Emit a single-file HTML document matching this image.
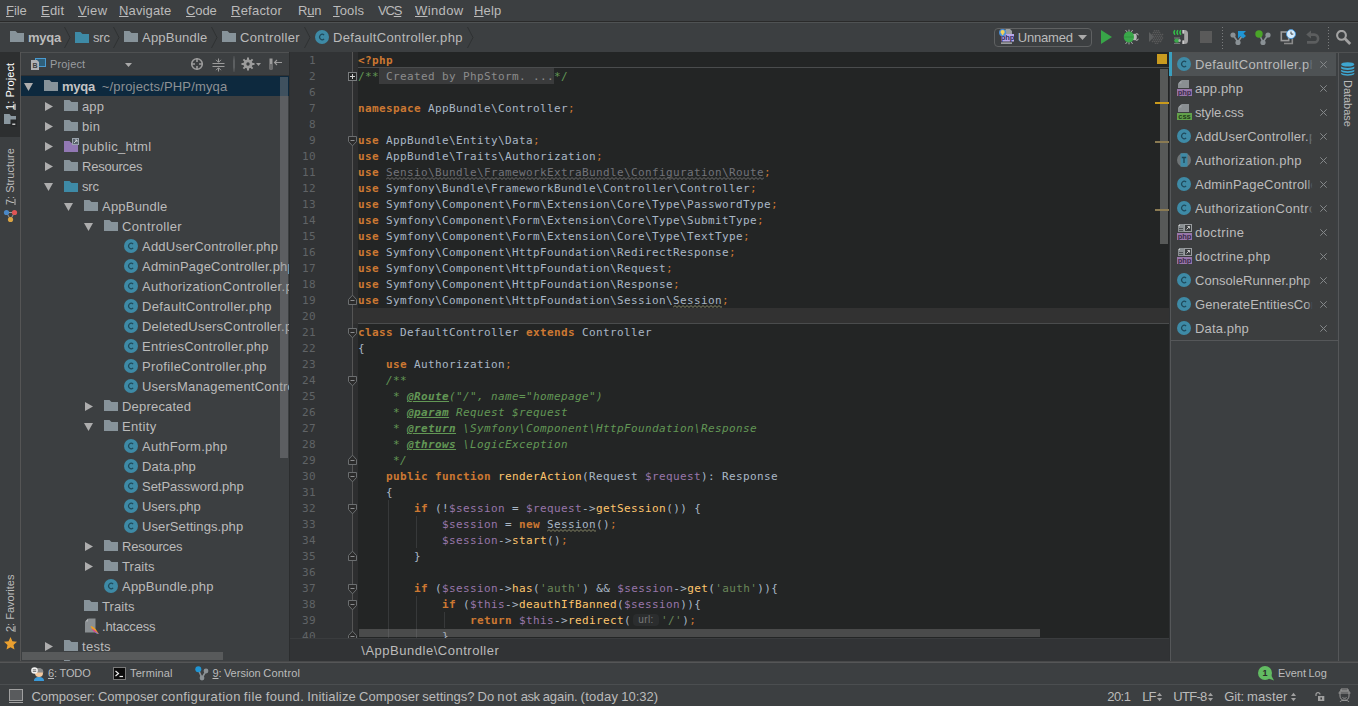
<!DOCTYPE html>
<html lang="en">
<head>
<meta charset="utf-8">
<title>myqa - DefaultController.php - PhpStorm</title>
<style>
html,body{margin:0;padding:0;background:#3c3f41;}
body{width:1358px;height:706px;overflow:hidden;font-family:"Liberation Sans",sans-serif;font-size:13px;color:#bbbbbb;}
#app{position:relative;width:1358px;height:706px;overflow:hidden;background:#3c3f41;}
#app>div,#app>svg,#app>span{position:absolute;}
.t{white-space:pre;display:block;}
u{text-decoration:underline;text-underline-offset:1px;}
.clip{overflow:hidden;}
.clip>*{position:absolute;}
.code{font-family:"DejaVu Sans Mono","Liberation Mono",monospace;font-size:11px;line-height:16px;letter-spacing:0.378px;white-space:pre;color:#a9b7c6;}
.code div{height:16px;overflow:hidden;}
.ln{font-family:"DejaVu Sans Mono","Liberation Mono",monospace;font-size:11px;line-height:16px;letter-spacing:0.378px;color:#606366;text-align:right;}
.ln div{height:16px;}
.k{color:#cc7832;font-weight:bold;}
.o{color:#cc7832;}
.v{color:#9876aa;}
.f{color:#ffc66d;}
.s{color:#6a8759;}
.d{color:#629755;font-style:italic;}
.dn{color:#629755;}
.dt{color:#629755;font-style:italic;font-weight:bold;text-decoration:underline;}
.g{color:#72737a;}
.wv{}
.fold{color:#8c8c8c;}
.sp{display:inline-block;width:30px;height:1px;}

</style>
</head>
<body>
<div id="app">
<div style="left:0px;top:0px;width:1358px;height:21px;background:#3c3f41;"></div>
<div style="left:0px;top:21px;width:1358px;height:1px;background:#2a2a2a;"></div>
<div style="left:0px;top:22px;width:1358px;height:1px;background:#4f5253;"></div>
<span class="t" style="left:6.00px;top:4.00px;font-size:13px;line-height:13px;color:#bbbbbb;letter-spacing:-0.044px;"><u>F</u>ile</span>
<span class="t" style="left:41.00px;top:4.00px;font-size:13px;line-height:13px;color:#bbbbbb;letter-spacing:0.216px;"><u>E</u>dit</span>
<span class="t" style="left:78.00px;top:4.00px;font-size:13px;line-height:13px;color:#bbbbbb;letter-spacing:0.355px;"><u>V</u>iew</span>
<span class="t" style="left:119.00px;top:4.00px;font-size:13px;line-height:13px;color:#bbbbbb;letter-spacing:0.129px;"><u>N</u>avigate</span>
<span class="t" style="left:186.00px;top:4.00px;font-size:13px;line-height:13px;color:#bbbbbb;letter-spacing:-0.115px;"><u>C</u>ode</span>
<span class="t" style="left:231.00px;top:4.00px;font-size:13px;line-height:13px;color:#bbbbbb;letter-spacing:0.231px;"><u>R</u>efactor</span>
<span class="t" style="left:298.00px;top:4.00px;font-size:13px;line-height:13px;color:#bbbbbb;letter-spacing:-0.233px;">R<u>u</u>n</span>
<span class="t" style="left:333.00px;top:4.00px;font-size:13px;line-height:13px;color:#bbbbbb;letter-spacing:0.159px;"><u>T</u>ools</span>
<span class="t" style="left:378.00px;top:4.00px;font-size:13px;line-height:13px;color:#bbbbbb;letter-spacing:-1.160px;">VC<u>S</u></span>
<span class="t" style="left:415.00px;top:4.00px;font-size:13px;line-height:13px;color:#bbbbbb;letter-spacing:0.390px;"><u>W</u>indow</span>
<span class="t" style="left:474.00px;top:4.00px;font-size:13px;line-height:13px;color:#bbbbbb;letter-spacing:0.186px;"><u>H</u>elp</span>
<div style="left:0px;top:23px;width:1358px;height:29px;background:#3c3f41;"></div>
<svg style="left:10px;top:31px;" width="14" height="11" viewBox="0 0 14 11"><path d="M0 0H5.5L7.5 2H14V11H0Z" fill="#87939a"/></svg>
<span class="t" style="left:28.00px;top:31.00px;font-size:13px;line-height:13px;color:#bbbbbb;letter-spacing:-0.215px;font-weight:700;">myqa</span>
<svg style="left:63.5px;top:27px;" width="7" height="21" viewBox="0 0 7 21"><path d="M0.5 0L6 10.5L0.5 21" fill="none" stroke="#2f3233" stroke-width="1"/></svg>
<svg style="left:75px;top:32px;" width="14" height="11" viewBox="0 0 14 11"><path d="M0 0H5.5L7.5 2H14V11H0Z" fill="#3e8aa6"/></svg>
<span class="t" style="left:93.00px;top:31.00px;font-size:13px;line-height:13px;color:#bbbbbb;letter-spacing:-0.195px;">src</span>
<svg style="left:112.5px;top:27px;" width="7" height="21" viewBox="0 0 7 21"><path d="M0.5 0L6 10.5L0.5 21" fill="none" stroke="#2f3233" stroke-width="1"/></svg>
<svg style="left:124px;top:31px;" width="14" height="11" viewBox="0 0 14 11"><path d="M0 0H5.5L7.5 2H14V11H0Z" fill="#87939a"/></svg>
<span class="t" style="left:142.00px;top:31.00px;font-size:13px;line-height:13px;color:#bbbbbb;letter-spacing:0.213px;">AppBundle</span>
<svg style="left:210.5px;top:27px;" width="7" height="21" viewBox="0 0 7 21"><path d="M0.5 0L6 10.5L0.5 21" fill="none" stroke="#2f3233" stroke-width="1"/></svg>
<svg style="left:222px;top:31px;" width="14" height="11" viewBox="0 0 14 11"><path d="M0 0H5.5L7.5 2H14V11H0Z" fill="#87939a"/></svg>
<span class="t" style="left:240.00px;top:31.00px;font-size:13px;line-height:13px;color:#bbbbbb;letter-spacing:0.371px;">Controller</span>
<svg style="left:303.5px;top:27px;" width="7" height="21" viewBox="0 0 7 21"><path d="M0.5 0L6 10.5L0.5 21" fill="none" stroke="#2f3233" stroke-width="1"/></svg>
<svg style="left:315px;top:30px;" width="14" height="14" viewBox="0 0 14 14"><circle cx="7" cy="7" r="7" fill="#3e8aa6"/><path d="M9.1 5A2.7 2.7 0 1 0 9.1 9" fill="none" stroke="#1f4a5c" stroke-width="1.15"/></svg>
<span class="t" style="left:333.00px;top:31.00px;font-size:13px;line-height:13px;color:#bbbbbb;letter-spacing:0.367px;">DefaultController.php</span>
<svg style="left:466.5px;top:27px;" width="7" height="21" viewBox="0 0 7 21"><path d="M0.5 0L6 10.5L0.5 21" fill="none" stroke="#2f3233" stroke-width="1"/></svg>
<div style="left:994px;top:28px;width:96px;height:17px;border:1px solid #5f6162;border-radius:4px;background:#3c3f41"></div>
<svg style="left:999px;top:28px;" width="16" height="17" viewBox="0 0 16 17"><path d="M7 1H11L13 3V7H6V2Z" fill="#9a9d9f"/><rect x="2" y="6" width="13" height="7.5" fill="#b9a7ea"/><text x="8.5" y="12.4" font-family="Liberation Sans,sans-serif" font-size="7.5" font-weight="bold" text-anchor="middle" fill="#2f2c5c">php</text><rect x="2" y="14.3" width="11" height="1.7" fill="#9a9d9f"/><circle cx="3.6" cy="4.6" r="3.6" fill="#4a90d9"/><circle cx="3.6" cy="4" r="2.1" fill="#f6d358"/><rect x="2.8" y="5.4" width="1.6" height="1.7" fill="#f6d358"/></svg>
<span class="t" style="left:1017.80px;top:31.00px;font-size:13px;line-height:13px;color:#bbbbbb;letter-spacing:-0.196px;">Unnamed</span>
<svg style="left:1078px;top:35px;" width="9" height="5" viewBox="0 0 9 5"><path d="M0 0H9L4.5 5Z" fill="#aaaaaa"/></svg>
<svg style="left:1101px;top:30px;" width="11" height="14" viewBox="0 0 11 14"><path d="M0 0L11 7L0 14Z" fill="#38a548"/></svg>
<svg style="left:1123px;top:29px;" width="16" height="16" viewBox="0 0 16 16"><path d="M2.5 1L4.3 3.2M6 0.6V2.8M9.6 1L8.2 3.2M2.5 15L4.3 12.8M6 15.4V13.2M9.6 15L8.2 12.8" stroke="#a8a8a8" stroke-width="1" fill="none"/><ellipse cx="11.2" cy="8" rx="2.6" ry="3.2" fill="#b8b8b8"/><path d="M12.2 5.4C13.6 4.2 15 4.8 15.4 6.2M12.2 10.6C13.6 11.8 15 11.2 15.4 9.8" stroke="#c4c4c4" stroke-width="1" fill="none"/><path d="M6 2.6C9 2.6 11 5 11 8S9 13.4 6 13.4S0.8 11 0.8 8S3 2.6 6 2.6Z" fill="#3aa84a"/><path d="M1 8H10" stroke="#2f8f3e" stroke-width="0.8"/></svg>
<svg style="left:1148px;top:30px;" width="16" height="14" viewBox="0 0 16 14"><path d="M1 2L6 7L1 12Z" fill="#5c5e5f"/><g fill="#58595a"><rect x="5.8" y="0.1" width="1.4" height="1.4" transform="rotate(45 6.5 0.8)"/><rect x="7.8" y="0.1" width="1.4" height="1.4" transform="rotate(45 8.5 0.8)"/><rect x="9.8" y="0.1" width="1.4" height="1.4" transform="rotate(45 10.5 0.8)"/><rect x="4.8" y="1.9" width="1.4" height="1.4" transform="rotate(45 5.5 2.6)"/><rect x="6.8" y="1.9" width="1.4" height="1.4" transform="rotate(45 7.5 2.6)"/><rect x="8.8" y="1.9" width="1.4" height="1.4" transform="rotate(45 9.5 2.6)"/><rect x="10.8" y="1.9" width="1.4" height="1.4" transform="rotate(45 11.5 2.6)"/><rect x="3.8" y="3.7" width="1.4" height="1.4" transform="rotate(45 4.5 4.4)"/><rect x="5.8" y="3.7" width="1.4" height="1.4" transform="rotate(45 6.5 4.4)"/><rect x="7.8" y="3.7" width="1.4" height="1.4" transform="rotate(45 8.5 4.4)"/><rect x="9.8" y="3.7" width="1.4" height="1.4" transform="rotate(45 10.5 4.4)"/><rect x="11.8" y="3.7" width="1.4" height="1.4" transform="rotate(45 12.5 4.4)"/><rect x="13.8" y="3.7" width="1.4" height="1.4" transform="rotate(45 14.5 4.4)"/><rect x="4.8" y="5.5" width="1.4" height="1.4" transform="rotate(45 5.5 6.2)"/><rect x="6.8" y="5.5" width="1.4" height="1.4" transform="rotate(45 7.5 6.2)"/><rect x="8.8" y="5.5" width="1.4" height="1.4" transform="rotate(45 9.5 6.2)"/><rect x="10.8" y="5.5" width="1.4" height="1.4" transform="rotate(45 11.5 6.2)"/><rect x="12.8" y="5.5" width="1.4" height="1.4" transform="rotate(45 13.5 6.2)"/><rect x="3.8" y="7.3" width="1.4" height="1.4" transform="rotate(45 4.5 8.0)"/><rect x="5.8" y="7.3" width="1.4" height="1.4" transform="rotate(45 6.5 8.0)"/><rect x="7.8" y="7.3" width="1.4" height="1.4" transform="rotate(45 8.5 8.0)"/><rect x="9.8" y="7.3" width="1.4" height="1.4" transform="rotate(45 10.5 8.0)"/><rect x="11.8" y="7.3" width="1.4" height="1.4" transform="rotate(45 12.5 8.0)"/><rect x="13.8" y="7.3" width="1.4" height="1.4" transform="rotate(45 14.5 8.0)"/><rect x="4.8" y="9.1" width="1.4" height="1.4" transform="rotate(45 5.5 9.8)"/><rect x="6.8" y="9.1" width="1.4" height="1.4" transform="rotate(45 7.5 9.8)"/><rect x="8.8" y="9.1" width="1.4" height="1.4" transform="rotate(45 9.5 9.8)"/><rect x="10.8" y="9.1" width="1.4" height="1.4" transform="rotate(45 11.5 9.8)"/><rect x="12.8" y="9.1" width="1.4" height="1.4" transform="rotate(45 13.5 9.8)"/><rect x="3.8" y="10.9" width="1.4" height="1.4" transform="rotate(45 4.5 11.6)"/><rect x="5.8" y="10.9" width="1.4" height="1.4" transform="rotate(45 6.5 11.6)"/><rect x="7.8" y="10.9" width="1.4" height="1.4" transform="rotate(45 8.5 11.6)"/><rect x="9.8" y="10.9" width="1.4" height="1.4" transform="rotate(45 10.5 11.6)"/><rect x="11.8" y="10.9" width="1.4" height="1.4" transform="rotate(45 12.5 11.6)"/><rect x="6.8" y="12.7" width="1.4" height="1.4" transform="rotate(45 7.5 13.4)"/><rect x="8.8" y="12.7" width="1.4" height="1.4" transform="rotate(45 9.5 13.4)"/></g></svg>
<svg style="left:1173px;top:29px;" width="16" height="16" viewBox="0 0 16 16"><path d="M9.5 1H11.5A3.5 3.5 0 0 1 15 4.5V11.5A3.5 3.5 0 0 1 11.5 15H9.5V11.6H11.2V4.4H9.5Z" fill="#a4a4a4"/><path d="M9.5 1H11V4.4H9.5ZM9.5 11.6H11V15H9.5Z" fill="#c9c9c9"/><path d="M2 1.3c-1.2 1.3-1.2 3.1 0 4.4M5 1.3c-1.2 1.3-1.2 3.1 0 4.4M8 1.3c-1.2 1.3-1.2 3.1 0 4.4" stroke="#34c04a" stroke-width="1.5" fill="none"/><ellipse cx="3.8" cy="11.6" rx="2.6" ry="2.2" fill="#3aa84a"/><ellipse cx="6.6" cy="11.6" rx="1.2" ry="1.5" fill="#b0b0b0"/><path d="M1.5 9h1M3.5 9h1M5.5 9h1M1.5 14.4h1M3.5 14.4h1M5.5 14.4h1" stroke="#c8c8c8" stroke-width="0.9"/></svg>
<div style="left:1200px;top:31px;width:12px;height:12px;background:#5a5a5a;"></div>
<div style="left:1222px;top:27px;width:1px;height:22px;background:repeating-linear-gradient(180deg,#7a7c7d 0,#7a7c7d 1px,rgba(0,0,0,0) 1px,rgba(0,0,0,0) 3px)"></div>
<div style="left:1328px;top:27px;width:1px;height:22px;background:repeating-linear-gradient(180deg,#7a7c7d 0,#7a7c7d 1px,rgba(0,0,0,0) 1px,rgba(0,0,0,0) 3px)"></div>
<svg style="left:1229.7px;top:29.5px;" width="17" height="16" viewBox="0 0 17 16"><path d="M3 5L8 12L12 6" stroke="#8a9195" stroke-width="1.6" fill="none"/><circle cx="3" cy="5" r="2.6" fill="#8a9195"/><circle cx="8" cy="12.5" r="2.6" fill="#8a9195"/><path d="M8 1H16L13.5 3.5L16 6L13 8.5L10.5 6L8 8.5Z" fill="#1f95d4"/></svg>
<svg style="left:1254.5px;top:29.5px;" width="17" height="16" viewBox="0 0 17 16"><path d="M4 4L8 12L13 5" stroke="#8a9195" stroke-width="1.6" fill="none"/><circle cx="13" cy="5" r="2.6" fill="#8a9195"/><circle cx="8" cy="12.5" r="2.6" fill="#8a9195"/><circle cx="4" cy="4" r="3.7" fill="#4aa528"/></svg>
<svg style="left:1279.5px;top:28.5px;" width="17" height="17" viewBox="0 0 17 17"><rect x="1.3" y="3" width="7.4" height="8.6" fill="none" stroke="#9a9a9a" stroke-width="1.6"/><path d="M4 14.5H12.3V10" fill="none" stroke="#8a8a8a" stroke-width="1.6"/><circle cx="11" cy="5.1" r="4.5" fill="#d8ecfb" stroke="#4a9be0" stroke-width="0.9"/><path d="M11 2.6V5.1H13.3" stroke="#444" stroke-width="1" fill="none"/></svg>
<svg style="left:1305px;top:30px;" width="15" height="15" viewBox="0 0 15 15"><path d="M1.2 4.6L6 0.6V8.6Z" fill="#5c5e5f"/><path d="M5.5 4.6H9.2A3.9 3.9 0 0 1 9.2 12.4H2" fill="none" stroke="#5c5e5f" stroke-width="2.6"/></svg>
<svg style="left:1336px;top:30px;" width="16" height="16" viewBox="0 0 16 16"><circle cx="5.5" cy="5.3" r="4.4" fill="none" stroke="#a3a3a3" stroke-width="2.1"/><path d="M8.8 8.6L14.2 14" stroke="#a3a3a3" stroke-width="2.8"/></svg>
<div style="left:0px;top:52px;width:20px;height:610px;background:#3c3f41;"></div>
<div style="left:0px;top:52px;width:20px;height:85px;background:#2d2f30;"></div>
<div style="left:20px;top:52px;width:1px;height:610px;background:#555555;"></div>
<span class="t" style="left:10px;top:109.5px;font-size:11px;line-height:11px;color:#ffffff;transform-origin:0 0;transform:rotate(-90deg) translateY(-50%);letter-spacing:0.073px"><u>1</u>: Project</span>
<svg style="left:4px;top:114px;" width="13" height="13" viewBox="0 0 13 13"><path d="M0 0H5.5L7 2H12V10H0Z" fill="#8a979f"/><rect x="6.5" y="5.5" width="6.5" height="7" fill="#262829"/><rect x="8.3" y="9.6" width="3" height="1.2" fill="#eeeeee"/></svg>
<span class="t" style="left:10px;top:205.3px;font-size:11px;line-height:11px;color:#bbbbbb;transform-origin:0 0;transform:rotate(-90deg) translateY(-50%);letter-spacing:-0.005px"><u>7</u>: Structure</span>
<svg style="left:3px;top:209px;" width="15" height="14" viewBox="0 0 15 14"><path d="M3.5 3.5L7.5 10.5L11.5 3.5Z" fill="none" stroke="#9a9a9a" stroke-width="1"/><circle cx="3.5" cy="3.5" r="2.6" fill="#4a88c7"/><circle cx="11.5" cy="3.5" r="2.6" fill="#e05555"/><circle cx="7.5" cy="10.5" r="2.6" fill="#d9a343"/></svg>
<span class="t" style="left:10px;top:631.6px;font-size:11px;line-height:11px;color:#bbbbbb;transform-origin:0 0;transform:rotate(-90deg) translateY(-50%);letter-spacing:-0.006px"><u>2</u>: Favorites</span>
<svg style="left:4px;top:636.5px;" width="13" height="13" viewBox="0 0 13 13"><path d="M6.5 0L8.4 4.3L13 4.8L9.5 7.9L10.5 12.6L6.5 10.2L2.5 12.6L3.5 7.9L0 4.8L4.6 4.3Z" fill="#eaa030"/></svg>
<div style="left:21px;top:52px;width:268px;height:1px;background:#4f5152;"></div>
<div style="left:21px;top:53px;width:268px;height:22px;background:#3c3f41;"></div>
<div style="left:21px;top:75px;width:268px;height:1px;background:#2f3133;"></div>
<svg style="left:31px;top:57px;" width="15" height="14" viewBox="0 0 15 14"><rect x="4.5" y="1.5" width="10" height="8" fill="#2f5f7a" stroke="#4a9bd1" stroke-width="1"/><path d="M0 3H6L8 5V13H0Z" fill="#afb1b3"/><text x="1.6" y="11.3" font-family="Liberation Sans,sans-serif" font-size="7" font-weight="bold" fill="#3c3f41">B</text></svg>
<span class="t" style="left:50.00px;top:58.69px;font-size:11px;line-height:11px;color:#9a9da0;letter-spacing:0.150px;">Project</span>
<svg style="left:125px;top:63px;" width="8" height="5" viewBox="0 0 8 5"><path d="M0 0H7L3.5 4Z" fill="#aaaaaa"/></svg>
<svg style="left:190px;top:57px;" width="14" height="14" viewBox="0 0 14 14"><circle cx="7" cy="7" r="5.3" fill="none" stroke="#9c9c9c" stroke-width="1.6"/><path d="M7 1V5M7 9V13M1 7H5M9 7H13" stroke="#9c9c9c" stroke-width="1.6"/></svg>
<svg style="left:212px;top:58px;" width="13" height="14" viewBox="0 0 13 14"><path d="M0.5 5.5H12.5M0.5 8.5H12.5" stroke="#9c9c9c" stroke-width="1"/><path d="M6.5 0.5V4M6.5 10V13.5" stroke="#9c9c9c" stroke-width="1"/><path d="M4 1.8L6.5 4.3L9 1.8M4 12.2L6.5 9.7L9 12.2" fill="none" stroke="#9c9c9c" stroke-width="1"/></svg>
<div style="left:233px;top:56px;width:2px;height:16px;background:linear-gradient(180deg,#45484a,#5c5f61 30%,#5c5f61 70%,#45484a);"></div>
<svg style="left:241px;top:57px;" width="14" height="14" viewBox="0 0 14 14"><g fill="#9c9c9c"><circle cx="7" cy="7" r="4.6"/><rect x="6" y="0.5" width="2" height="13"/><rect x="0.5" y="6" width="13" height="2"/><rect x="6" y="0.5" width="2" height="13" transform="rotate(45 7 7)"/><rect x="6" y="0.5" width="2" height="13" transform="rotate(-45 7 7)"/></g><circle cx="7" cy="7" r="1.7" fill="#3c3f41"/></svg>
<svg style="left:256px;top:63px;" width="6" height="4" viewBox="0 0 6 4"><path d="M0 0H5L2.5 3Z" fill="#9c9c9c"/></svg>
<svg style="left:269px;top:58px;" width="14" height="13" viewBox="0 0 14 13"><rect x="0.5" y="0.5" width="3" height="11" fill="#9c9c9c"/><rect x="1.5" y="6" width="1" height="5" fill="#3c3f41"/><path d="M5 4.5H13M8 2L5.5 4.5L8 7" fill="none" stroke="#9c9c9c" stroke-width="1.1"/></svg>
<div style="left:21px;top:76px;width:268px;height:20px;background:#0d293e;"></div>
<svg style="left:24px;top:83px;" width="9" height="8" viewBox="0 0 9 8"><path d="M0 0H9L4.5 8Z" fill="#adadad"/></svg>
<svg style="left:44px;top:80px;" width="14" height="11" viewBox="0 0 14 11"><path d="M0 0H5.5L7.5 2H14V11H0Z" fill="#87939a"/></svg>
<span class="t" style="left:62.00px;top:80.00px;font-size:13px;line-height:13px;color:#c4c4c4;letter-spacing:-0.215px;font-weight:700;">myqa</span>
<span class="t" style="left:101.80px;top:80.00px;font-size:13px;line-height:13px;color:#8e9194;letter-spacing:0.165px;">~/projects/PHP/myqa</span>
<svg style="left:45px;top:102px;" width="8" height="9" viewBox="0 0 8 9"><path d="M0 0L8 4.5L0 9Z" fill="#adadad"/></svg>
<svg style="left:64px;top:100px;" width="14" height="11" viewBox="0 0 14 11"><path d="M0 0H5.5L7.5 2H14V11H0Z" fill="#87939a"/></svg>
<span class="t" style="left:82.00px;top:100.00px;font-size:13px;line-height:13px;color:#bbbbbb;letter-spacing:0.133px;">app</span>
<svg style="left:45px;top:122px;" width="8" height="9" viewBox="0 0 8 9"><path d="M0 0L8 4.5L0 9Z" fill="#adadad"/></svg>
<svg style="left:64px;top:120px;" width="14" height="11" viewBox="0 0 14 11"><path d="M0 0H5.5L7.5 2H14V11H0Z" fill="#87939a"/></svg>
<span class="t" style="left:82.00px;top:120.00px;font-size:13px;line-height:13px;color:#bbbbbb;letter-spacing:0.331px;">bin</span>
<svg style="left:45px;top:142px;" width="8" height="9" viewBox="0 0 8 9"><path d="M0 0L8 4.5L0 9Z" fill="#adadad"/></svg>
<svg style="left:64px;top:141px;" width="14" height="11" viewBox="0 0 14 11"><path d="M0 0H5.5L7.5 2H14V11H0Z" fill="#9278b4"/></svg>
<svg style="left:72px;top:138px;" width="7" height="7" viewBox="0 0 7 7"><rect x="0.5" y="0.5" width="6" height="6" fill="#59626c" stroke="#9aa3ac"/><path d="M2 5L5 2M3 2H5V4" stroke="#d4d8dc" stroke-width="0.9" fill="none"/></svg>
<span class="t" style="left:82.00px;top:140.00px;font-size:13px;line-height:13px;color:#bbbbbb;letter-spacing:0.332px;">public_html</span>
<svg style="left:45px;top:162px;" width="8" height="9" viewBox="0 0 8 9"><path d="M0 0L8 4.5L0 9Z" fill="#adadad"/></svg>
<svg style="left:64px;top:160px;" width="14" height="11" viewBox="0 0 14 11"><path d="M0 0H5.5L7.5 2H14V11H0Z" fill="#87939a"/></svg>
<span class="t" style="left:82.00px;top:160.00px;font-size:13px;line-height:13px;color:#bbbbbb;letter-spacing:-0.215px;">Resources</span>
<svg style="left:44px;top:183px;" width="9" height="8" viewBox="0 0 9 8"><path d="M0 0H9L4.5 8Z" fill="#adadad"/></svg>
<svg style="left:64px;top:181px;" width="14" height="11" viewBox="0 0 14 11"><path d="M0 0H5.5L7.5 2H14V11H0Z" fill="#3e8aa6"/></svg>
<span class="t" style="left:82.00px;top:180.00px;font-size:13px;line-height:13px;color:#bbbbbb;letter-spacing:-0.195px;">src</span>
<svg style="left:64px;top:203px;" width="9" height="8" viewBox="0 0 9 8"><path d="M0 0H9L4.5 8Z" fill="#adadad"/></svg>
<svg style="left:84px;top:200px;" width="14" height="11" viewBox="0 0 14 11"><path d="M0 0H5.5L7.5 2H14V11H0Z" fill="#87939a"/></svg>
<span class="t" style="left:102.00px;top:200.00px;font-size:13px;line-height:13px;color:#bbbbbb;letter-spacing:0.213px;">AppBundle</span>
<svg style="left:84px;top:223px;" width="9" height="8" viewBox="0 0 9 8"><path d="M0 0H9L4.5 8Z" fill="#adadad"/></svg>
<svg style="left:104px;top:220px;" width="14" height="11" viewBox="0 0 14 11"><path d="M0 0H5.5L7.5 2H14V11H0Z" fill="#87939a"/></svg>
<span class="t" style="left:122.00px;top:220.00px;font-size:13px;line-height:13px;color:#bbbbbb;letter-spacing:0.371px;">Controller</span>
<svg style="left:124px;top:239px;" width="14" height="14" viewBox="0 0 14 14"><circle cx="7" cy="7" r="7" fill="#3e8aa6"/><path d="M9.1 5A2.7 2.7 0 1 0 9.1 9" fill="none" stroke="#1f4a5c" stroke-width="1.15"/></svg>
<span class="t" style="left:142.00px;top:240.00px;font-size:13px;line-height:13px;color:#bbbbbb;letter-spacing:0.225px;">AddUserController.php</span>
<svg style="left:124px;top:259px;" width="14" height="14" viewBox="0 0 14 14"><circle cx="7" cy="7" r="7" fill="#3e8aa6"/><path d="M9.1 5A2.7 2.7 0 1 0 9.1 9" fill="none" stroke="#1f4a5c" stroke-width="1.15"/></svg>
<span class="t" style="left:142.00px;top:260.00px;font-size:13px;line-height:13px;color:#bbbbbb;letter-spacing:0.209px;">AdminPageController.php</span>
<svg style="left:124px;top:279px;" width="14" height="14" viewBox="0 0 14 14"><circle cx="7" cy="7" r="7" fill="#3e8aa6"/><path d="M9.1 5A2.7 2.7 0 1 0 9.1 9" fill="none" stroke="#1f4a5c" stroke-width="1.15"/></svg>
<span class="t" style="left:142.00px;top:280.00px;font-size:13px;line-height:13px;color:#bbbbbb;letter-spacing:0.350px;">AuthorizationController.php</span>
<svg style="left:124px;top:299px;" width="14" height="14" viewBox="0 0 14 14"><circle cx="7" cy="7" r="7" fill="#3e8aa6"/><path d="M9.1 5A2.7 2.7 0 1 0 9.1 9" fill="none" stroke="#1f4a5c" stroke-width="1.15"/></svg>
<span class="t" style="left:142.00px;top:300.00px;font-size:13px;line-height:13px;color:#bbbbbb;letter-spacing:0.367px;">DefaultController.php</span>
<svg style="left:124px;top:319px;" width="14" height="14" viewBox="0 0 14 14"><circle cx="7" cy="7" r="7" fill="#3e8aa6"/><path d="M9.1 5A2.7 2.7 0 1 0 9.1 9" fill="none" stroke="#1f4a5c" stroke-width="1.15"/></svg>
<span class="t" style="left:142.00px;top:320.00px;font-size:13px;line-height:13px;color:#bbbbbb;letter-spacing:0.215px;">DeletedUsersController.php</span>
<svg style="left:124px;top:339px;" width="14" height="14" viewBox="0 0 14 14"><circle cx="7" cy="7" r="7" fill="#3e8aa6"/><path d="M9.1 5A2.7 2.7 0 1 0 9.1 9" fill="none" stroke="#1f4a5c" stroke-width="1.15"/></svg>
<span class="t" style="left:142.00px;top:340.00px;font-size:13px;line-height:13px;color:#bbbbbb;letter-spacing:0.249px;">EntriesController.php</span>
<svg style="left:124px;top:359px;" width="14" height="14" viewBox="0 0 14 14"><circle cx="7" cy="7" r="7" fill="#3e8aa6"/><path d="M9.1 5A2.7 2.7 0 1 0 9.1 9" fill="none" stroke="#1f4a5c" stroke-width="1.15"/></svg>
<span class="t" style="left:142.00px;top:360.00px;font-size:13px;line-height:13px;color:#bbbbbb;letter-spacing:0.337px;">ProfileController.php</span>
<svg style="left:124px;top:379px;" width="14" height="14" viewBox="0 0 14 14"><circle cx="7" cy="7" r="7" fill="#3e8aa6"/><path d="M9.1 5A2.7 2.7 0 1 0 9.1 9" fill="none" stroke="#1f4a5c" stroke-width="1.15"/></svg>
<span class="t" style="left:142.00px;top:380.00px;font-size:13px;line-height:13px;color:#bbbbbb;letter-spacing:0.196px;">UsersManagementController.php</span>
<svg style="left:85px;top:402px;" width="8" height="9" viewBox="0 0 8 9"><path d="M0 0L8 4.5L0 9Z" fill="#adadad"/></svg>
<svg style="left:104px;top:400px;" width="14" height="11" viewBox="0 0 14 11"><path d="M0 0H5.5L7.5 2H14V11H0Z" fill="#87939a"/></svg>
<span class="t" style="left:122.00px;top:400.00px;font-size:13px;line-height:13px;color:#bbbbbb;letter-spacing:0.201px;">Deprecated</span>
<svg style="left:84px;top:423px;" width="9" height="8" viewBox="0 0 9 8"><path d="M0 0H9L4.5 8Z" fill="#adadad"/></svg>
<svg style="left:104px;top:420px;" width="14" height="11" viewBox="0 0 14 11"><path d="M0 0H5.5L7.5 2H14V11H0Z" fill="#87939a"/></svg>
<span class="t" style="left:122.00px;top:420.00px;font-size:13px;line-height:13px;color:#bbbbbb;letter-spacing:0.361px;">Entity</span>
<svg style="left:124px;top:439px;" width="14" height="14" viewBox="0 0 14 14"><circle cx="7" cy="7" r="7" fill="#3e8aa6"/><path d="M9.1 5A2.7 2.7 0 1 0 9.1 9" fill="none" stroke="#1f4a5c" stroke-width="1.15"/></svg>
<span class="t" style="left:142.00px;top:440.00px;font-size:13px;line-height:13px;color:#bbbbbb;letter-spacing:0.267px;">AuthForm.php</span>
<svg style="left:124px;top:459px;" width="14" height="14" viewBox="0 0 14 14"><circle cx="7" cy="7" r="7" fill="#3e8aa6"/><path d="M9.1 5A2.7 2.7 0 1 0 9.1 9" fill="none" stroke="#1f4a5c" stroke-width="1.15"/></svg>
<span class="t" style="left:142.00px;top:460.00px;font-size:13px;line-height:13px;color:#bbbbbb;letter-spacing:0.148px;">Data.php</span>
<svg style="left:124px;top:479px;" width="14" height="14" viewBox="0 0 14 14"><circle cx="7" cy="7" r="7" fill="#3e8aa6"/><path d="M9.1 5A2.7 2.7 0 1 0 9.1 9" fill="none" stroke="#1f4a5c" stroke-width="1.15"/></svg>
<span class="t" style="left:142.00px;top:480.00px;font-size:13px;line-height:13px;color:#bbbbbb;letter-spacing:-0.016px;">SetPassword.php</span>
<svg style="left:124px;top:499px;" width="14" height="14" viewBox="0 0 14 14"><circle cx="7" cy="7" r="7" fill="#3e8aa6"/><path d="M9.1 5A2.7 2.7 0 1 0 9.1 9" fill="none" stroke="#1f4a5c" stroke-width="1.15"/></svg>
<span class="t" style="left:142.00px;top:500.00px;font-size:13px;line-height:13px;color:#bbbbbb;letter-spacing:-0.069px;">Users.php</span>
<svg style="left:124px;top:519px;" width="14" height="14" viewBox="0 0 14 14"><circle cx="7" cy="7" r="7" fill="#3e8aa6"/><path d="M9.1 5A2.7 2.7 0 1 0 9.1 9" fill="none" stroke="#1f4a5c" stroke-width="1.15"/></svg>
<span class="t" style="left:142.00px;top:520.00px;font-size:13px;line-height:13px;color:#bbbbbb;letter-spacing:0.096px;">UserSettings.php</span>
<svg style="left:85px;top:542px;" width="8" height="9" viewBox="0 0 8 9"><path d="M0 0L8 4.5L0 9Z" fill="#adadad"/></svg>
<svg style="left:104px;top:540px;" width="14" height="11" viewBox="0 0 14 11"><path d="M0 0H5.5L7.5 2H14V11H0Z" fill="#87939a"/></svg>
<span class="t" style="left:122.00px;top:540.00px;font-size:13px;line-height:13px;color:#bbbbbb;letter-spacing:-0.215px;">Resources</span>
<svg style="left:85px;top:562px;" width="8" height="9" viewBox="0 0 8 9"><path d="M0 0L8 4.5L0 9Z" fill="#adadad"/></svg>
<svg style="left:104px;top:560px;" width="14" height="11" viewBox="0 0 14 11"><path d="M0 0H5.5L7.5 2H14V11H0Z" fill="#87939a"/></svg>
<span class="t" style="left:122.00px;top:560.00px;font-size:13px;line-height:13px;color:#bbbbbb;letter-spacing:0.093px;">Traits</span>
<svg style="left:104px;top:579px;" width="14" height="14" viewBox="0 0 14 14"><circle cx="7" cy="7" r="7" fill="#3e8aa6"/><path d="M9.1 5A2.7 2.7 0 1 0 9.1 9" fill="none" stroke="#1f4a5c" stroke-width="1.15"/></svg>
<span class="t" style="left:122.00px;top:580.00px;font-size:13px;line-height:13px;color:#bbbbbb;letter-spacing:0.206px;">AppBundle.php</span>
<svg style="left:84px;top:600px;" width="14" height="11" viewBox="0 0 14 11"><path d="M0 0H5.5L7.5 2H14V11H0Z" fill="#87939a"/></svg>
<span class="t" style="left:102.00px;top:600.00px;font-size:13px;line-height:13px;color:#bbbbbb;letter-spacing:0.093px;">Traits</span>
<svg style="left:84px;top:618px;" width="15" height="17" viewBox="0 0 15 17"><path d="M4.5 0.5H11.5V14.5H1V4Z" fill="#8a8f92"/><path d="M1 3.6L4 0.5V3.6Z" fill="#aeb1b3"/><path d="M6.5 8C9.5 8.3 12.5 11.5 14.8 16C11.5 14.8 8.2 12.6 6.5 8Z" fill="#f0a020"/><path d="M7.6 10.4C10 11.4 12.6 13.6 14.8 16C11.6 15 9 13.4 7.6 10.4Z" fill="#d2409a"/><path d="M11 13.6L14.8 16L12.6 15.6Z" fill="#4aa3df"/></svg>
<span class="t" style="left:102.00px;top:620.00px;font-size:13px;line-height:13px;color:#bbbbbb;letter-spacing:-0.176px;">.htaccess</span>
<svg style="left:45px;top:642px;" width="8" height="9" viewBox="0 0 8 9"><path d="M0 0L8 4.5L0 9Z" fill="#adadad"/></svg>
<svg style="left:64px;top:640px;" width="14" height="11" viewBox="0 0 14 11"><path d="M0 0H5.5L7.5 2H14V11H0Z" fill="#87939a"/></svg>
<span class="t" style="left:82.00px;top:640.00px;font-size:13px;line-height:13px;color:#bbbbbb;letter-spacing:0.289px;">tests</span>
<svg style="left:64px;top:660px;" width="14" height="11" viewBox="0 0 14 11"><path d="M0 0H5.5L7.5 2H14V11H0Z" fill="#87939a"/></svg>
<div style="left:280px;top:77px;width:8px;height:381px;background:rgba(140,142,144,0.40);"></div>
<div style="left:22px;top:652px;width:201px;height:8px;background:rgba(128,128,128,0.42);"></div>
<div style="left:289px;top:52px;width:1px;height:610px;background:#2b2d2e;"></div>
<div style="left:290px;top:52px;width:68px;height:586px;background:#313335;"></div>
<div style="left:353px;top:52px;width:5px;height:586px;background:#2d2e2f;"></div>
<div style="left:358px;top:52px;width:811px;height:586px;background:#232525;"></div>
<div style="left:352px;top:52px;width:1px;height:586px;background:#555555;"></div>
<div style="left:353px;top:308px;width:816px;height:16px;background:#323232;"></div>
<div style="left:358px;top:67px;width:811px;height:1px;background:#4a4c4d;"></div>
<div style="left:358px;top:323px;width:811px;height:1px;background:#4a4c4d;"></div>
<div style="left:379px;top:68px;width:175px;height:16px;background:#3a3b3c;"></div>
<div class="ln" style="left:290px;top:53px;width:26px;height:585px;overflow:hidden"><div>1</div><div>2</div><div>6</div><div>7</div><div>8</div><div>9</div><div>10</div><div>11</div><div>12</div><div>13</div><div>14</div><div>15</div><div>16</div><div>17</div><div>18</div><div>19</div><div>20</div><div>21</div><div>22</div><div>23</div><div>24</div><div>25</div><div>26</div><div>27</div><div>28</div><div>29</div><div>30</div><div>31</div><div>32</div><div>33</div><div>34</div><div>35</div><div>36</div><div>37</div><div>38</div><div>39</div><div>40</div></div>
<div class="code" style="left:358px;top:53px;width:810px;height:585px;overflow:hidden"><div><span class="k">&lt;?php</span></div><div><span class="dn">/**</span><span class="fold"> Created by PhpStorm. ...</span><span class="dn">*/</span></div><div></div><div><span class="k">namespace</span> AppBundle\Controller<span class="o">;</span></div><div></div><div><span class="k">use</span> AppBundle\Entity\Data<span class="o">;</span></div><div><span class="k">use</span> AppBundle\Traits\Authorization<span class="o">;</span></div><div><span class="k">use</span> <span class="g wv">Sensio\Bundle\FrameworkExtraBundle\Configuration\Route</span><span class="o">;</span></div><div><span class="k">use</span> Symfony\Bundle\FrameworkBundle\Controller\Controller<span class="o">;</span></div><div><span class="k">use</span> Symfony\Component\Form\Extension\Core\Type\PasswordType<span class="o">;</span></div><div><span class="k">use</span> Symfony\Component\Form\Extension\Core\Type\SubmitType<span class="o">;</span></div><div><span class="k">use</span> Symfony\Component\Form\Extension\Core\Type\TextType<span class="o">;</span></div><div><span class="k">use</span> Symfony\Component\HttpFoundation\RedirectResponse<span class="o">;</span></div><div><span class="k">use</span> Symfony\Component\HttpFoundation\Request<span class="o">;</span></div><div><span class="k">use</span> Symfony\Component\HttpFoundation\Response<span class="o">;</span></div><div><span class="k">use</span> Symfony\Component\HttpFoundation\Session\<span class="wv">Session</span><span class="o">;</span></div><div></div><div><span class="k">class</span> DefaultController <span class="k">extends</span> Controller</div><div>{</div><div>    <span class="k">use</span> Authorization<span class="o">;</span></div><div>    <span class="d">/**</span></div><div>    <span class="d"> * </span><span class="dt">@Route</span><span class="d">("/", name="homepage")</span></div><div>    <span class="d"> * </span><span class="dt">@param</span><span class="d"> Request $request</span></div><div>    <span class="d"> * </span><span class="dt">@return</span><span class="d"> \Symfony\Component\HttpFoundation\Response</span></div><div>    <span class="d"> * </span><span class="dt">@throws</span><span class="d"> \LogicException</span></div><div>    <span class="d"> */</span></div><div>    <span class="k">public function</span> <span class="f">renderAction</span>(Request <span class="v">$request</span>): Response</div><div>    {</div><div>        <span class="k">if</span> (!<span class="v">$session</span> = <span class="v">$request</span>-&gt;<span class="f">getSession</span>()) {</div><div>            <span class="v">$session</span> = <span class="k">new</span> <span class="wv">Session</span>()<span class="o">;</span></div><div>            <span class="v">$session</span>-&gt;<span class="f">start</span>()<span class="o">;</span></div><div>        }</div><div></div><div>        <span class="k">if</span> (<span class="v">$session</span>-&gt;<span class="f">has</span>(<span class="s">'auth'</span>) &amp;&amp; <span class="v">$session</span>-&gt;<span class="f">get</span>(<span class="s">'auth'</span>)){</div><div>            <span class="k">if</span> (<span class="v">$this</span>-&gt;<span class="f">deauthIfBanned</span>(<span class="v">$session</span>)){</div><div>                <span class="k">return</span> <span class="v">$this</span>-&gt;<span class="f">redirect</span>(<span class="sp"></span><span class="s">'/'</span>)<span class="o">;</span></div><div>            }</div></div>
<div style="left:633px;top:614px;width:26px;height:12px;border-radius:4px;background:#2b2d2e"></div>
<span class="t" style="left:638.30px;top:614.54px;font-size:10px;line-height:10px;color:#787878;letter-spacing:0.348px;">url:</span>
<div style="left:388px;top:500px;width:1px;height:138px;background:#37393a;"></div>
<div style="left:416px;top:516px;width:1px;height:32px;background:#37393a;"></div>
<div style="left:416px;top:596px;width:1px;height:42px;background:#37393a;"></div>
<div style="left:444px;top:612px;width:1px;height:16px;background:#37393a;"></div>
<svg style="left:386px;top:177px;" width="378" height="3" viewBox="0 0 378 3"><path d="M386 2.5L388 0.5L390 2.5L392 0.5L394 2.5L396 0.5L398 2.5L400 0.5L402 2.5L404 0.5L406 2.5L408 0.5L410 2.5L412 0.5L414 2.5L416 0.5L418 2.5L420 0.5L422 2.5L424 0.5L426 2.5L428 0.5L430 2.5L432 0.5L434 2.5L436 0.5L438 2.5L440 0.5L442 2.5L444 0.5L446 2.5L448 0.5L450 2.5L452 0.5L454 2.5L456 0.5L458 2.5L460 0.5L462 2.5L464 0.5L466 2.5L468 0.5L470 2.5L472 0.5L474 2.5L476 0.5L478 2.5L480 0.5L482 2.5L484 0.5L486 2.5L488 0.5L490 2.5L492 0.5L494 2.5L496 0.5L498 2.5L500 0.5L502 2.5L504 0.5L506 2.5L508 0.5L510 2.5L512 0.5L514 2.5L516 0.5L518 2.5L520 0.5L522 2.5L524 0.5L526 2.5L528 0.5L530 2.5L532 0.5L534 2.5L536 0.5L538 2.5L540 0.5L542 2.5L544 0.5L546 2.5L548 0.5L550 2.5L552 0.5L554 2.5L556 0.5L558 2.5L560 0.5L562 2.5L564 0.5L566 2.5L568 0.5L570 2.5L572 0.5L574 2.5L576 0.5L578 2.5L580 0.5L582 2.5L584 0.5L586 2.5L588 0.5L590 2.5L592 0.5L594 2.5L596 0.5L598 2.5L600 0.5L602 2.5L604 0.5L606 2.5L608 0.5L610 2.5L612 0.5L614 2.5L616 0.5L618 2.5L620 0.5L622 2.5L624 0.5L626 2.5L628 0.5L630 2.5L632 0.5L634 2.5L636 0.5L638 2.5L640 0.5L642 2.5L644 0.5L646 2.5L648 0.5L650 2.5L652 0.5L654 2.5L656 0.5L658 2.5L660 0.5L662 2.5L664 0.5L666 2.5L668 0.5L670 2.5L672 0.5L674 2.5L676 0.5L678 2.5L680 0.5L682 2.5L684 0.5L686 2.5L688 0.5L690 2.5L692 0.5L694 2.5L696 0.5L698 2.5L700 0.5L702 2.5L704 0.5L706 2.5L708 0.5L710 2.5L712 0.5L714 2.5L716 0.5L718 2.5L720 0.5L722 2.5L724 0.5L726 2.5L728 0.5L730 2.5L732 0.5L734 2.5L736 0.5L738 2.5L740 0.5L742 2.5L744 0.5L746 2.5L748 0.5L750 2.5L752 0.5L754 2.5L756 0.5L758 2.5L760 0.5L762 2.5L764 0.5" transform="translate(-386 0)" fill="none" stroke="#707070" stroke-width="1"/></svg>
<svg style="left:673px;top:305px;" width="49" height="3" viewBox="0 0 49 3"><path d="M673 2.5L675 0.5L677 2.5L679 0.5L681 2.5L683 0.5L685 2.5L687 0.5L689 2.5L691 0.5L693 2.5L695 0.5L697 2.5L699 0.5L701 2.5L703 0.5L705 2.5L707 0.5L709 2.5L711 0.5L713 2.5L715 0.5L717 2.5L719 0.5L721 2.5L723 0.5" transform="translate(-673 0)" fill="none" stroke="#8a8a6a" stroke-width="1"/></svg>
<svg style="left:547px;top:529px;" width="49" height="3" viewBox="0 0 49 3"><path d="M547 2.5L549 0.5L551 2.5L553 0.5L555 2.5L557 0.5L559 2.5L561 0.5L563 2.5L565 0.5L567 2.5L569 0.5L571 2.5L573 0.5L575 2.5L577 0.5L579 2.5L581 0.5L583 2.5L585 0.5L587 2.5L589 0.5L591 2.5L593 0.5L595 2.5L597 0.5" transform="translate(-547 0)" fill="none" stroke="#8a8a6a" stroke-width="1"/></svg>
<svg style="left:348px;top:72px;" width="9" height="9" viewBox="0 0 9 9"><rect x="0.5" y="0.5" width="8" height="8" fill="#232525" stroke="#7a7d7f"/><path d="M2 4.5H7M4.5 2V7" stroke="#d0d0d0" stroke-width="1"/></svg>
<svg style="left:348px;top:136px;" width="9" height="10" viewBox="0 0 9 10"><path d="M0.5 0.5H8.5V5.5L4.5 9.8L0.5 5.5Z" fill="#2b2b2b" stroke="#6b6e70"/><path d="M2.5 4.5H6.5" stroke="#8a8c8e" stroke-width="1"/></svg>
<svg style="left:348px;top:328px;" width="9" height="10" viewBox="0 0 9 10"><path d="M0.5 0.5H8.5V5.5L4.5 9.8L0.5 5.5Z" fill="#2b2b2b" stroke="#6b6e70"/><path d="M2.5 4.5H6.5" stroke="#8a8c8e" stroke-width="1"/></svg>
<svg style="left:348px;top:376px;" width="9" height="10" viewBox="0 0 9 10"><path d="M0.5 0.5H8.5V5.5L4.5 9.8L0.5 5.5Z" fill="#2b2b2b" stroke="#6b6e70"/><path d="M2.5 4.5H6.5" stroke="#8a8c8e" stroke-width="1"/></svg>
<svg style="left:348px;top:472px;" width="9" height="10" viewBox="0 0 9 10"><path d="M0.5 0.5H8.5V5.5L4.5 9.8L0.5 5.5Z" fill="#2b2b2b" stroke="#6b6e70"/><path d="M2.5 4.5H6.5" stroke="#8a8c8e" stroke-width="1"/></svg>
<svg style="left:348px;top:504px;" width="9" height="10" viewBox="0 0 9 10"><path d="M0.5 0.5H8.5V5.5L4.5 9.8L0.5 5.5Z" fill="#2b2b2b" stroke="#6b6e70"/><path d="M2.5 4.5H6.5" stroke="#8a8c8e" stroke-width="1"/></svg>
<svg style="left:348px;top:584px;" width="9" height="10" viewBox="0 0 9 10"><path d="M0.5 0.5H8.5V5.5L4.5 9.8L0.5 5.5Z" fill="#2b2b2b" stroke="#6b6e70"/><path d="M2.5 4.5H6.5" stroke="#8a8c8e" stroke-width="1"/></svg>
<svg style="left:348px;top:600px;" width="9" height="10" viewBox="0 0 9 10"><path d="M0.5 0.5H8.5V5.5L4.5 9.8L0.5 5.5Z" fill="#2b2b2b" stroke="#6b6e70"/><path d="M2.5 4.5H6.5" stroke="#8a8c8e" stroke-width="1"/></svg>
<svg style="left:348px;top:295px;" width="9" height="10" viewBox="0 0 9 10"><path d="M0.5 9.5H8.5V4.5L4.5 0.2L0.5 4.5Z" fill="#2b2b2b" stroke="#6b6e70"/><path d="M2.5 5.5H6.5" stroke="#8a8c8e" stroke-width="1"/></svg>
<svg style="left:348px;top:455px;" width="9" height="10" viewBox="0 0 9 10"><path d="M0.5 9.5H8.5V4.5L4.5 0.2L0.5 4.5Z" fill="#2b2b2b" stroke="#6b6e70"/><path d="M2.5 5.5H6.5" stroke="#8a8c8e" stroke-width="1"/></svg>
<svg style="left:348px;top:551px;" width="9" height="10" viewBox="0 0 9 10"><path d="M0.5 9.5H8.5V4.5L4.5 0.2L0.5 4.5Z" fill="#2b2b2b" stroke="#6b6e70"/><path d="M2.5 5.5H6.5" stroke="#8a8c8e" stroke-width="1"/></svg>
<svg style="left:348px;top:631px;" width="9" height="10" viewBox="0 0 9 10"><path d="M0.5 9.5H8.5V4.5L4.5 0.2L0.5 4.5Z" fill="#2b2b2b" stroke="#6b6e70"/><path d="M2.5 5.5H6.5" stroke="#8a8c8e" stroke-width="1"/></svg>
<div style="left:359px;top:629px;width:681px;height:8px;background:rgba(166,166,166,0.30);"></div>
<div style="left:1157px;top:54px;width:10px;height:10px;background:#c99b1f;"></div>
<div style="left:1160px;top:69px;width:8px;height:175px;background:#575958;"></div>
<div style="left:1155px;top:102px;width:14px;height:2px;background:#c99a1c;"></div>
<div style="left:1155px;top:141px;width:14px;height:2px;background:#8a7a52;"></div>
<div style="left:1155px;top:209px;width:14px;height:2px;background:#8a7a52;"></div>
<div style="left:290px;top:638px;width:879px;height:1px;background:#3a3c3e;"></div>
<div style="left:290px;top:639px;width:879px;height:22px;background:#313335;"></div>
<span class="t" style="left:361.30px;top:644.00px;font-size:13px;line-height:13px;color:#bbbbbb;letter-spacing:0.514px;">\AppBundle\Controller</span>
<div style="left:1169px;top:52px;width:1px;height:610px;background:#2f3133;"></div>
<div style="left:1170px;top:52px;width:1px;height:610px;background:#555759;"></div>
<div style="left:1171px;top:52px;width:167px;height:610px;background:#3c3f41;"></div>
<div style="left:1338px;top:52px;width:1px;height:610px;background:#555759;"></div>
<div style="left:1171px;top:76px;width:165px;height:264px;background:#3c3e3f;"></div>
<div style="left:1171px;top:53px;width:165px;height:23px;background:#4e5254;"></div>
<div style="left:1171px;top:340px;width:167px;height:1px;background:#555759;"></div>
<div style="left:1171px;top:52px;width:187px;height:1px;background:#4f5152;"></div>
<div style="left:1169px;top:52px;width:3px;height:24px;background:#3a9fbf;"></div>
<svg style="left:1177px;top:57px;" width="14" height="14" viewBox="0 0 14 14"><circle cx="7" cy="7" r="7" fill="#3e8aa6"/><path d="M9.1 5A2.7 2.7 0 1 0 9.1 9" fill="none" stroke="#1f4a5c" stroke-width="1.15"/></svg>
<div class="clip" style="left:1195px;top:53px;width:119px;height:23px">
<span class="t" style="left:0.00px;top:5.00px;font-size:13px;line-height:13px;color:#bbbbbb;letter-spacing:0.367px;">DefaultController.php</span>
<div style="left:112px;top:0;width:7px;height:24px;background:linear-gradient(90deg,rgba(0,0,0,0),#4e5254 80%)"></div>
</div>
<svg style="left:1320px;top:61px;" width="7" height="7" viewBox="0 0 7 7"><path d="M0.3 0.3L6.7 6.7M6.7 0.3L0.3 6.7" stroke="#85888a" stroke-width="1"/></svg>
<svg style="left:1177px;top:80px;" width="15" height="16" viewBox="0 0 15 16"><path d="M5 0H12V8H1V4Z" fill="#8a8f92"/><path d="M1 3.5L4.5 0V3.5Z" fill="#9da2a5"/><rect x="0" y="9" width="15" height="7" fill="#9876aa"/><text x="7.5" y="15" font-family="Liberation Sans,sans-serif" font-size="7.5" font-weight="bold" text-anchor="middle" fill="#3a2a48">php</text></svg>
<div class="clip" style="left:1195px;top:77px;width:119px;height:23px">
<span class="t" style="left:0.00px;top:5.00px;font-size:13px;line-height:13px;color:#bbbbbb;letter-spacing:0.160px;">app.php</span>
<div style="left:112px;top:0;width:7px;height:24px;background:linear-gradient(90deg,rgba(0,0,0,0),#3c3e3f 80%)"></div>
</div>
<svg style="left:1320px;top:85px;" width="7" height="7" viewBox="0 0 7 7"><path d="M0.3 0.3L6.7 6.7M6.7 0.3L0.3 6.7" stroke="#85888a" stroke-width="1"/></svg>
<svg style="left:1177px;top:104px;" width="15" height="16" viewBox="0 0 15 16"><path d="M5 0H12V8H1V4Z" fill="#8a8f92"/><path d="M1 3.5L4.5 0V3.5Z" fill="#9da2a5"/><rect x="0" y="9" width="15" height="7" fill="#62a14b"/><text x="7.5" y="15" font-family="Liberation Sans,sans-serif" font-size="7.5" font-weight="bold" text-anchor="middle" fill="#1f3d18">css</text></svg>
<div class="clip" style="left:1195px;top:101px;width:119px;height:23px">
<span class="t" style="left:0.00px;top:5.00px;font-size:13px;line-height:13px;color:#bbbbbb;letter-spacing:-0.145px;">style.css</span>
<div style="left:112px;top:0;width:7px;height:24px;background:linear-gradient(90deg,rgba(0,0,0,0),#3c3e3f 80%)"></div>
</div>
<svg style="left:1320px;top:109px;" width="7" height="7" viewBox="0 0 7 7"><path d="M0.3 0.3L6.7 6.7M6.7 0.3L0.3 6.7" stroke="#85888a" stroke-width="1"/></svg>
<svg style="left:1177px;top:129px;" width="14" height="14" viewBox="0 0 14 14"><circle cx="7" cy="7" r="7" fill="#3e8aa6"/><path d="M9.1 5A2.7 2.7 0 1 0 9.1 9" fill="none" stroke="#1f4a5c" stroke-width="1.15"/></svg>
<div class="clip" style="left:1195px;top:125px;width:119px;height:23px">
<span class="t" style="left:0.00px;top:5.00px;font-size:13px;line-height:13px;color:#bbbbbb;letter-spacing:0.225px;">AddUserController.php</span>
<div style="left:112px;top:0;width:7px;height:24px;background:linear-gradient(90deg,rgba(0,0,0,0),#3c3e3f 80%)"></div>
</div>
<svg style="left:1320px;top:133px;" width="7" height="7" viewBox="0 0 7 7"><path d="M0.3 0.3L6.7 6.7M6.7 0.3L0.3 6.7" stroke="#85888a" stroke-width="1"/></svg>
<svg style="left:1177px;top:153px;" width="14" height="14" viewBox="0 0 14 14"><circle cx="7" cy="7" r="7" fill="#6f7476"/><rect x="3.5" y="0.3" width="7" height="13.4" fill="#3e8aa6"/><path d="M4.8 4.5H9.2M7 4.5V10" stroke="#1f4553" stroke-width="1.3" fill="none"/></svg>
<div class="clip" style="left:1195px;top:149px;width:119px;height:23px">
<span class="t" style="left:0.00px;top:5.00px;font-size:13px;line-height:13px;color:#bbbbbb;letter-spacing:0.331px;">Authorization.php</span>
<div style="left:112px;top:0;width:7px;height:24px;background:linear-gradient(90deg,rgba(0,0,0,0),#3c3e3f 80%)"></div>
</div>
<svg style="left:1320px;top:157px;" width="7" height="7" viewBox="0 0 7 7"><path d="M0.3 0.3L6.7 6.7M6.7 0.3L0.3 6.7" stroke="#85888a" stroke-width="1"/></svg>
<svg style="left:1177px;top:177px;" width="14" height="14" viewBox="0 0 14 14"><circle cx="7" cy="7" r="7" fill="#3e8aa6"/><path d="M9.1 5A2.7 2.7 0 1 0 9.1 9" fill="none" stroke="#1f4a5c" stroke-width="1.15"/></svg>
<div class="clip" style="left:1195px;top:173px;width:119px;height:23px">
<span class="t" style="left:0.00px;top:5.00px;font-size:13px;line-height:13px;color:#bbbbbb;letter-spacing:0.209px;">AdminPageController.php</span>
<div style="left:112px;top:0;width:7px;height:24px;background:linear-gradient(90deg,rgba(0,0,0,0),#3c3e3f 80%)"></div>
</div>
<svg style="left:1320px;top:181px;" width="7" height="7" viewBox="0 0 7 7"><path d="M0.3 0.3L6.7 6.7M6.7 0.3L0.3 6.7" stroke="#85888a" stroke-width="1"/></svg>
<svg style="left:1177px;top:201px;" width="14" height="14" viewBox="0 0 14 14"><circle cx="7" cy="7" r="7" fill="#3e8aa6"/><path d="M9.1 5A2.7 2.7 0 1 0 9.1 9" fill="none" stroke="#1f4a5c" stroke-width="1.15"/></svg>
<div class="clip" style="left:1195px;top:197px;width:119px;height:23px">
<span class="t" style="left:0.00px;top:5.00px;font-size:13px;line-height:13px;color:#bbbbbb;letter-spacing:0.350px;">AuthorizationController.php</span>
<div style="left:112px;top:0;width:7px;height:24px;background:linear-gradient(90deg,rgba(0,0,0,0),#3c3e3f 80%)"></div>
</div>
<svg style="left:1320px;top:205px;" width="7" height="7" viewBox="0 0 7 7"><path d="M0.3 0.3L6.7 6.7M6.7 0.3L0.3 6.7" stroke="#85888a" stroke-width="1"/></svg>
<svg style="left:1177px;top:224px;" width="15" height="16" viewBox="0 0 15 16"><path d="M3 0H7V8H1V2Z" fill="#8a8f92"/><path d="M1 2L3 0V2Z" fill="#c8cacb"/><path d="M2 6.5H6M2 4.5H6" stroke="#3c3f41" stroke-width="0.8"/><rect x="7.5" y="0.5" width="7" height="7" fill="#3c3f41" stroke="#9a9da0" stroke-width="1"/><path d="M9.5 5.5L12.5 2.5M10.5 2.5H12.5V4.5" stroke="#c4c4c4" stroke-width="1" fill="none"/><rect x="0" y="9" width="15" height="7" fill="#9876aa"/><text x="7.5" y="15" font-family="Liberation Sans,sans-serif" font-size="7.5" font-weight="bold" text-anchor="middle" fill="#3a2a48">php</text></svg>
<div class="clip" style="left:1195px;top:221px;width:119px;height:23px">
<span class="t" style="left:0.00px;top:5.00px;font-size:13px;line-height:13px;color:#bbbbbb;letter-spacing:0.407px;">doctrine</span>
<div style="left:112px;top:0;width:7px;height:24px;background:linear-gradient(90deg,rgba(0,0,0,0),#3c3e3f 80%)"></div>
</div>
<svg style="left:1320px;top:229px;" width="7" height="7" viewBox="0 0 7 7"><path d="M0.3 0.3L6.7 6.7M6.7 0.3L0.3 6.7" stroke="#85888a" stroke-width="1"/></svg>
<svg style="left:1177px;top:248px;" width="15" height="16" viewBox="0 0 15 16"><path d="M3 0H7V8H1V2Z" fill="#8a8f92"/><path d="M1 2L3 0V2Z" fill="#c8cacb"/><path d="M2 6.5H6M2 4.5H6" stroke="#3c3f41" stroke-width="0.8"/><rect x="7.5" y="0.5" width="7" height="7" fill="#3c3f41" stroke="#9a9da0" stroke-width="1"/><path d="M9.5 5.5L12.5 2.5M10.5 2.5H12.5V4.5" stroke="#c4c4c4" stroke-width="1" fill="none"/><rect x="0" y="9" width="15" height="7" fill="#9876aa"/><text x="7.5" y="15" font-family="Liberation Sans,sans-serif" font-size="7.5" font-weight="bold" text-anchor="middle" fill="#3a2a48">php</text></svg>
<div class="clip" style="left:1195px;top:245px;width:119px;height:23px">
<span class="t" style="left:0.00px;top:5.00px;font-size:13px;line-height:13px;color:#bbbbbb;letter-spacing:0.334px;">doctrine.php</span>
<div style="left:112px;top:0;width:7px;height:24px;background:linear-gradient(90deg,rgba(0,0,0,0),#3c3e3f 80%)"></div>
</div>
<svg style="left:1320px;top:253px;" width="7" height="7" viewBox="0 0 7 7"><path d="M0.3 0.3L6.7 6.7M6.7 0.3L0.3 6.7" stroke="#85888a" stroke-width="1"/></svg>
<svg style="left:1177px;top:273px;" width="14" height="14" viewBox="0 0 14 14"><circle cx="7" cy="7" r="7" fill="#3e8aa6"/><path d="M9.1 5A2.7 2.7 0 1 0 9.1 9" fill="none" stroke="#1f4a5c" stroke-width="1.15"/></svg>
<div class="clip" style="left:1195px;top:269px;width:119px;height:23px">
<span class="t" style="left:0.00px;top:5.00px;font-size:13px;line-height:13px;color:#bbbbbb;letter-spacing:0.038px;">ConsoleRunner.php</span>
<div style="left:112px;top:0;width:7px;height:24px;background:linear-gradient(90deg,rgba(0,0,0,0),#3c3e3f 80%)"></div>
</div>
<svg style="left:1320px;top:277px;" width="7" height="7" viewBox="0 0 7 7"><path d="M0.3 0.3L6.7 6.7M6.7 0.3L0.3 6.7" stroke="#85888a" stroke-width="1"/></svg>
<svg style="left:1177px;top:297px;" width="14" height="14" viewBox="0 0 14 14"><circle cx="7" cy="7" r="7" fill="#3e8aa6"/><path d="M9.1 5A2.7 2.7 0 1 0 9.1 9" fill="none" stroke="#1f4a5c" stroke-width="1.15"/></svg>
<div class="clip" style="left:1195px;top:293px;width:119px;height:23px">
<span class="t" style="left:0.00px;top:5.00px;font-size:13px;line-height:13px;color:#bbbbbb;letter-spacing:0.126px;">GenerateEntitiesCommand.php</span>
<div style="left:112px;top:0;width:7px;height:24px;background:linear-gradient(90deg,rgba(0,0,0,0),#3c3e3f 80%)"></div>
</div>
<svg style="left:1320px;top:301px;" width="7" height="7" viewBox="0 0 7 7"><path d="M0.3 0.3L6.7 6.7M6.7 0.3L0.3 6.7" stroke="#85888a" stroke-width="1"/></svg>
<svg style="left:1177px;top:321px;" width="14" height="14" viewBox="0 0 14 14"><circle cx="7" cy="7" r="7" fill="#3e8aa6"/><path d="M9.1 5A2.7 2.7 0 1 0 9.1 9" fill="none" stroke="#1f4a5c" stroke-width="1.15"/></svg>
<div class="clip" style="left:1195px;top:317px;width:119px;height:23px">
<span class="t" style="left:0.00px;top:5.00px;font-size:13px;line-height:13px;color:#bbbbbb;letter-spacing:0.148px;">Data.php</span>
<div style="left:112px;top:0;width:7px;height:24px;background:linear-gradient(90deg,rgba(0,0,0,0),#3c3e3f 80%)"></div>
</div>
<svg style="left:1320px;top:325px;" width="7" height="7" viewBox="0 0 7 7"><path d="M0.3 0.3L6.7 6.7M6.7 0.3L0.3 6.7" stroke="#85888a" stroke-width="1"/></svg>
<div style="left:1339px;top:53px;width:19px;height:609px;background:#3c3f41;"></div>
<svg style="left:1341px;top:62px;" width="14" height="14" viewBox="0 0 14 14"><g fill="#3ea6d0"><ellipse cx="6.7" cy="2.4" rx="6.6" ry="2.2"/><path d="M0.1 4.6c1.5 1.9 11.7 1.9 13.2 0v1.6c-1.5 2.3-11.7 2.3-13.2 0Z"/><path d="M0.1 7.7c1.5 1.9 11.7 1.9 13.2 0v1.6c-1.5 2.3-11.7 2.3-13.2 0Z"/><path d="M0.1 10.8c1.5 1.9 11.7 1.9 13.2 0v1.3c-1.5 2.3-11.7 2.3-13.2 0Z"/></g></svg>
<span class="t" style="left:1347px;top:80.3px;font-size:11px;line-height:11px;color:#bbbbbb;transform-origin:0 0;transform:rotate(90deg) translateY(-50%);letter-spacing:-0.037px">Database</span>
<div style="left:0px;top:661px;width:1358px;height:1px;background:#48494a;"></div>
<div style="left:0px;top:662px;width:1358px;height:1px;background:#555657;"></div>
<div style="left:0px;top:663px;width:1358px;height:21px;background:#3c3f41;"></div>
<div style="left:0px;top:684px;width:1358px;height:1px;background:#4b4e50;"></div>
<div style="left:0px;top:685px;width:1358px;height:21px;background:#3c3f41;"></div>
<svg style="left:31px;top:667px;" width="14" height="14" viewBox="0 0 14 14"><circle cx="8" cy="6" r="4" fill="#f3c9a0"/><path d="M3.5 5.5a4.5 4.5 0 0 1 9 0Z" fill="#8a8a8a"/><path d="M3 14c0-3 2-4 5-4s5 1 5 4Z" fill="#3a9ad9"/><circle cx="3.5" cy="3.5" r="3.3" fill="#f2f2f2"/><path d="M1.8 2.8H5.2M1.8 4.4H5.2" stroke="#555" stroke-width="0.8"/></svg>
<span class="t" style="left:48.00px;top:667.69px;font-size:11px;line-height:11px;color:#bbbbbb;letter-spacing:-0.091px;"><u>6</u>:</span>
<span class="t" style="left:59.55px;top:667.69px;font-size:11px;line-height:11px;color:#bbbbbb;letter-spacing:-0.127px;">TODO</span>
<svg style="left:113px;top:667px;" width="13" height="13" viewBox="0 0 13 13"><rect x="0.5" y="0.5" width="12" height="12" fill="#0c0c0c" stroke="#7a7a7a"/><path d="M2.5 4L5.5 6.5L2.5 9" stroke="#eee" stroke-width="1.2" fill="none"/><path d="M6.5 9.5H10" stroke="#eee" stroke-width="1.2"/></svg>
<span class="t" style="left:130.00px;top:667.69px;font-size:11px;line-height:11px;color:#bbbbbb;letter-spacing:0.128px;">Terminal</span>
<svg style="left:195px;top:666px;" width="14" height="15" viewBox="0 0 14 15"><path d="M3.5 4L7 12L11 5" stroke="#8a9195" stroke-width="1.6" fill="none"/><circle cx="11" cy="5" r="2.4" fill="#8a9195"/><circle cx="7" cy="12" r="2.4" fill="#8a9195"/><circle cx="3.3" cy="3.3" r="3" fill="#1f95d4"/></svg>
<span class="t" style="left:212.50px;top:667.69px;font-size:11px;line-height:11px;color:#bbbbbb;letter-spacing:-0.152px;"><u>9</u>:</span>
<span class="t" style="left:223.89px;top:667.69px;font-size:11px;line-height:11px;color:#bbbbbb;letter-spacing:0.019px;">Version</span>
<span class="t" style="left:263.23px;top:667.69px;font-size:11px;line-height:11px;color:#bbbbbb;letter-spacing:0.231px;">Control</span>
<svg style="left:1257.5px;top:665.5px;" width="17" height="15" viewBox="0 0 17 15"><circle cx="7" cy="7" r="7" fill="#62bb62"/><path d="M9 12L16 14.5L13 9Z" fill="#62bb62"/><text x="7" y="10.3" font-family="Liberation Sans,sans-serif" font-size="9" font-weight="bold" text-anchor="middle" fill="#2b2b2b">1</text></svg>
<span class="t" style="left:1278.00px;top:667.69px;font-size:11px;line-height:11px;color:#bbbbbb;letter-spacing:-0.033px;">Event</span>
<span class="t" style="left:1308.50px;top:667.69px;font-size:11px;line-height:11px;color:#bbbbbb;letter-spacing:-0.019px;">Log</span>
<svg style="left:9px;top:689px;" width="14" height="14" viewBox="0 0 14 14"><rect x="0.5" y="0.5" width="13" height="11" fill="#595b5d" stroke="#a0a0a0"/><path d="M0 13.5H14" stroke="#a0a0a0" stroke-width="1"/></svg>
<span class="t" style="left:31.40px;top:690.00px;font-size:13px;line-height:13px;color:#bbbbbb;letter-spacing:-0.007px;">Composer:</span>
<span class="t" style="left:97.91px;top:690.00px;font-size:13px;line-height:13px;color:#bbbbbb;letter-spacing:0.037px;">Composer</span>
<span class="t" style="left:161.17px;top:690.00px;font-size:13px;line-height:13px;color:#bbbbbb;letter-spacing:0.398px;">configuration</span>
<span class="t" style="left:243.78px;top:690.00px;font-size:13px;line-height:13px;color:#bbbbbb;letter-spacing:0.560px;">file</span>
<span class="t" style="left:265.64px;top:690.00px;font-size:13px;line-height:13px;color:#bbbbbb;letter-spacing:0.396px;">found.</span>
<span class="t" style="left:307.17px;top:690.00px;font-size:13px;line-height:13px;color:#bbbbbb;letter-spacing:0.192px;">Initialize</span>
<span class="t" style="left:359.07px;top:690.00px;font-size:13px;line-height:13px;color:#bbbbbb;letter-spacing:0.037px;">Composer</span>
<span class="t" style="left:422.32px;top:690.00px;font-size:13px;line-height:13px;color:#bbbbbb;letter-spacing:0.003px;">settings?</span>
<span class="t" style="left:477.40px;top:690.00px;font-size:13px;line-height:13px;color:#bbbbbb;letter-spacing:0.159px;">Do</span>
<span class="t" style="left:497.32px;top:690.00px;font-size:13px;line-height:13px;color:#bbbbbb;letter-spacing:0.746px;">not</span>
<span class="t" style="left:520.63px;top:690.00px;font-size:13px;line-height:13px;color:#bbbbbb;letter-spacing:-0.393px;">ask</span>
<span class="t" style="left:542.69px;top:690.00px;font-size:13px;line-height:13px;color:#bbbbbb;letter-spacing:-0.083px;">again.</span>
<span class="t" style="left:580.61px;top:690.00px;font-size:13px;line-height:13px;color:#bbbbbb;letter-spacing:0.252px;">(today</span>
<span class="t" style="left:621.26px;top:690.00px;font-size:13px;line-height:13px;color:#bbbbbb;letter-spacing:0.011px;">10:32)</span>
<span class="t" style="left:1107.30px;top:690.00px;font-size:13px;line-height:13px;color:#bbbbbb;letter-spacing:-0.578px;">20:1</span>
<span class="t" style="left:1142.20px;top:690.00px;font-size:13px;line-height:13px;color:#bbbbbb;letter-spacing:-0.936px;">LF</span>
<svg style="left:1157px;top:692px;" width="5" height="10" viewBox="0 0 5 10"><path d="M0 4L2.5 0.8L5 4Z" fill="#a0a0a0"/><path d="M0 6L2.5 9.2L5 6Z" fill="#a0a0a0"/></svg>
<span class="t" style="left:1173.20px;top:690.00px;font-size:13px;line-height:13px;color:#bbbbbb;letter-spacing:-0.669px;">UTF-8</span>
<svg style="left:1208px;top:692px;" width="5" height="10" viewBox="0 0 5 10"><path d="M0 4L2.5 0.8L5 4Z" fill="#a0a0a0"/><path d="M0 6L2.5 9.2L5 6Z" fill="#a0a0a0"/></svg>
<span class="t" style="left:1224.20px;top:690.00px;font-size:13px;line-height:13px;color:#bbbbbb;letter-spacing:-0.072px;">Git:</span>
<span class="t" style="left:1247.09px;top:690.00px;font-size:13px;line-height:13px;color:#bbbbbb;letter-spacing:0.112px;">master</span>
<svg style="left:1291px;top:692px;" width="5" height="10" viewBox="0 0 5 10"><path d="M0 4L2.5 0.8L5 4Z" fill="#a0a0a0"/><path d="M0 6L2.5 9.2L5 6Z" fill="#a0a0a0"/></svg>
<svg style="left:1315px;top:692px;" width="10" height="9" viewBox="0 0 10 9"><path d="M1 4V2.6A2 2 0 0 1 5 2.6" fill="none" stroke="#a0a0a0" stroke-width="1.2"/><rect x="3" y="4" width="6.3" height="5" fill="#a0a0a0"/><rect x="5.4" y="5.5" width="1.6" height="2" fill="#3c3f41"/></svg>
<svg style="left:1338px;top:688px;" width="13" height="15" viewBox="0 0 13 15"><path d="M2 3H11V8A4.5 4.5 0 0 1 2 8Z" fill="none" stroke="#9a9a9a" stroke-width="1"/><path d="M0.5 5H12.5" stroke="#9a9a9a" stroke-width="1"/><path d="M3 1H10V3H3Z" fill="none" stroke="#9a9a9a" stroke-width="1"/><path d="M2 14C3 11.5 10 11.5 11 14" fill="none" stroke="#9a9a9a" stroke-width="1"/><path d="M4.5 9.5C5.5 10.5 7.5 10.5 8.5 9.5" fill="none" stroke="#9a9a9a" stroke-width="1"/></svg>
</div>
</body>
</html>
